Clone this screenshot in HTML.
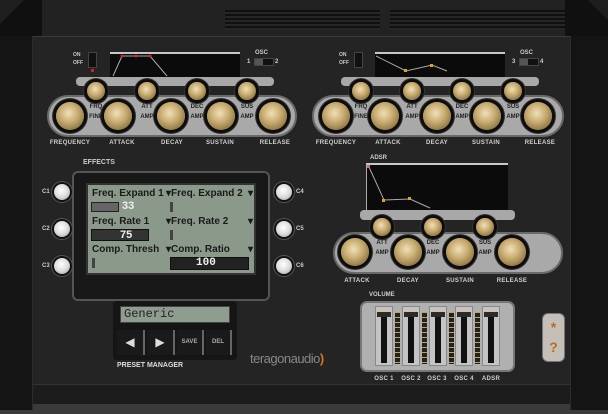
<!DOCTYPE html>
<html><head><meta charset="utf-8"><style>
*{margin:0;padding:0;box-sizing:border-box}
body{width:608px;height:414px;background:#3a3a3a;position:relative;overflow:hidden;font-family:"Liberation Sans",sans-serif}
.a{position:absolute}
.k{position:absolute;border-radius:50%;background:radial-gradient(circle at 45% 40%,#efe0b8 0%,#c9ad72 40%,#7a6232 90%,#4a3a1c 100%);box-shadow:0 0 0 3px #0d0d0d,0 0 0 4px #333}
.b{width:28px;height:28px}
.s{width:18px;height:18px}
.pill{position:absolute;background:#a9a9a9;border-radius:22px;border:2px solid #6a6a6a}
.bar{position:absolute;background:#a8a8a8;border-radius:4px}
.lb{position:absolute;color:#d0d0d0;font-size:6px;font-weight:bold;letter-spacing:.3px;transform:translateX(-50%);white-space:nowrap}
.il{position:absolute;color:#222;font-size:6px;font-weight:bold;transform:translateX(-50%)}
.disp{position:absolute;background:#0b0b0b;border-top:2px solid #c8c8c8}
.cb{position:absolute;width:16px;height:16px;border-radius:50%;background:radial-gradient(circle at 45% 40%,#fff 0%,#ddd 50%,#999 100%);box-shadow:0 0 0 2px #111,0 0 0 3px #555}
.cl{position:absolute;color:#ccc;font-size:6px;font-weight:bold}
.lcdt{position:absolute;font-size:10px;font-weight:bold;color:#1a1a1a;white-space:nowrap}
.fd{position:absolute;width:18px;height:60px;background:#c4c4c4;border:1px solid #888;top:306px}
.fd i{position:absolute;left:5px;top:8px;width:6px;height:48px;background:#111}
.fd b{position:absolute;left:1px;top:4px;width:14px;height:6px;background:#2a2a2a;border-top:1px solid #e0c080}
</style></head><body>
<div class="a" style="left:0;top:0;width:608px;height:404px;background:#1e1e1e"></div>
<div class="a" style="left:30px;top:0;width:540px;height:36px;background:#222"></div>
<div class="a" style="left:33px;top:36px;width:537px;height:348px;background:#242424;border-top:1px solid #3a3a3a"></div>
<div class="a" style="left:33px;top:384px;width:537px;height:20px;background:#1c1c1c;border-top:1px solid #333"></div>
<div class="a" style="left:0;top:36px;width:33px;height:374px;background:#141414;border-right:1px solid #2c2c2c"></div>
<div class="a" style="left:0;top:0;width:42px;height:36px;background:linear-gradient(135deg,#1e1e1e 30%,#101010 31%)"></div>
<div class="a" style="left:570px;top:36px;width:38px;height:374px;background:#141414;border-left:1px solid #2c2c2c"></div>
<div class="a" style="left:565px;top:0;width:43px;height:36px;background:linear-gradient(225deg,#1e1e1e 25%,#101010 26%)"></div>
<div class="a" style="left:225px;top:10px;width:155px;height:20px;background:repeating-linear-gradient(#101010 0 2px,#262626 2px 4px)"></div>
<div class="a" style="left:390px;top:10px;width:175px;height:20px;background:repeating-linear-gradient(#101010 0 2px,#262626 2px 4px)"></div>

<!-- OSC block 1 -->
<div class="cl" style="left:73px;top:52px;font-size:5px">ON</div>
<div class="cl" style="left:73px;top:60px;font-size:5px">OFF</div>
<div class="a" style="left:88px;top:52px;width:9px;height:16px;background:#111;border:1px solid #444"></div>
<div class="a" style="left:91px;top:69px;width:3px;height:3px;background:#c22"></div>
<div class="disp" style="left:110px;top:52px;width:130px;height:25px"></div>
<div class="cl" style="left:255px;top:50px">OSC</div>
<div class="cl" style="left:247px;top:59px">1</div><div class="cl" style="left:275px;top:59px">2</div>
<div class="a" style="left:254px;top:58px;width:20px;height:8px;background:#111;border:1px solid #444"></div>
<div class="a" style="left:255px;top:59px;width:8px;height:6px;background:#555"></div>
<div class="bar" style="left:76px;top:77px;width:198px;height:9px"></div>
<div class="pill" style="left:47px;top:95px;width:250px;height:42px"></div>
<div class="k s" style="left:87px;top:82px"></div><div class="k s" style="left:138px;top:82px"></div><div class="k s" style="left:188px;top:82px"></div><div class="k s" style="left:238px;top:82px"></div>
<div class="k b" style="left:56px;top:102px"></div><div class="k b" style="left:104px;top:102px"></div><div class="k b" style="left:157px;top:102px"></div><div class="k b" style="left:207px;top:102px"></div><div class="k b" style="left:259px;top:102px"></div>
<div class="il" style="left:96px;top:104px">FRQ</div><div class="il" style="left:147px;top:104px">ATT</div><div class="il" style="left:197px;top:104px">DEC</div><div class="il" style="left:247px;top:104px">SUS</div>
<div class="il" style="left:96px;top:114px">FINE</div><div class="il" style="left:147px;top:114px">AMP</div><div class="il" style="left:197px;top:114px">AMP</div><div class="il" style="left:247px;top:114px">AMP</div>
<div class="lb" style="left:70px;top:140px">FREQUENCY</div><div class="lb" style="left:122px;top:140px">ATTACK</div><div class="lb" style="left:172px;top:140px">DECAY</div><div class="lb" style="left:220px;top:140px">SUSTAIN</div><div class="lb" style="left:275px;top:140px">RELEASE</div>

<!-- OSC block 2 -->
<div class="cl" style="left:339px;top:52px;font-size:5px">ON</div>
<div class="cl" style="left:339px;top:60px;font-size:5px">OFF</div>
<div class="a" style="left:354px;top:52px;width:9px;height:16px;background:#111;border:1px solid #444"></div>
<div class="disp" style="left:375px;top:52px;width:130px;height:25px"></div>
<div class="cl" style="left:520px;top:50px">OSC</div>
<div class="cl" style="left:512px;top:59px">3</div><div class="cl" style="left:540px;top:59px">4</div>
<div class="a" style="left:519px;top:58px;width:20px;height:8px;background:#111;border:1px solid #444"></div>
<div class="a" style="left:520px;top:59px;width:8px;height:6px;background:#555"></div>
<div class="bar" style="left:341px;top:77px;width:198px;height:9px"></div>
<div class="pill" style="left:312px;top:95px;width:252px;height:42px"></div>
<div class="k s" style="left:352px;top:82px"></div><div class="k s" style="left:403px;top:82px"></div><div class="k s" style="left:453px;top:82px"></div><div class="k s" style="left:504px;top:82px"></div>
<div class="k b" style="left:322px;top:102px"></div><div class="k b" style="left:371px;top:102px"></div><div class="k b" style="left:423px;top:102px"></div><div class="k b" style="left:473px;top:102px"></div><div class="k b" style="left:524px;top:102px"></div>
<div class="il" style="left:361px;top:104px">FRQ</div><div class="il" style="left:412px;top:104px">ATT</div><div class="il" style="left:462px;top:104px">DEC</div><div class="il" style="left:513px;top:104px">SUS</div>
<div class="il" style="left:361px;top:114px">FINE</div><div class="il" style="left:412px;top:114px">AMP</div><div class="il" style="left:462px;top:114px">AMP</div><div class="il" style="left:513px;top:114px">AMP</div>
<div class="lb" style="left:336px;top:140px">FREQUENCY</div><div class="lb" style="left:388px;top:140px">ATTACK</div><div class="lb" style="left:437px;top:140px">DECAY</div><div class="lb" style="left:486px;top:140px">SUSTAIN</div><div class="lb" style="left:540px;top:140px">RELEASE</div>

<!-- ADSR -->
<div class="cl" style="left:370px;top:155px">ADSR</div>
<div class="a" style="left:366px;top:163px;width:142px;height:47px;background:#0b0b0b;border-top:2px solid #c8c8c8;border-left:1px solid #aaa"></div>
<div class="bar" style="left:360px;top:210px;width:155px;height:10px"></div>
<div class="pill" style="left:333px;top:232px;width:230px;height:42px"></div>
<div class="k s" style="left:373px;top:218px"></div><div class="k s" style="left:424px;top:218px"></div><div class="k s" style="left:476px;top:218px"></div>
<div class="k b" style="left:341px;top:238px"></div><div class="k b" style="left:394px;top:238px"></div><div class="k b" style="left:446px;top:238px"></div><div class="k b" style="left:498px;top:238px"></div>
<div class="il" style="left:382px;top:240px">ATT</div><div class="il" style="left:433px;top:240px">DEC</div><div class="il" style="left:485px;top:240px">SUS</div>
<div class="il" style="left:382px;top:250px">AMP</div><div class="il" style="left:433px;top:250px">AMP</div><div class="il" style="left:485px;top:250px">AMP</div>
<div class="lb" style="left:357px;top:278px">ATTACK</div><div class="lb" style="left:408px;top:278px">DECAY</div><div class="lb" style="left:460px;top:278px">SUSTAIN</div><div class="lb" style="left:512px;top:278px">RELEASE</div>

<!-- EFFECTS -->
<div class="cl" style="left:83px;top:159px;font-size:7px">EFFECTS</div>
<div class="a" style="left:72px;top:171px;width:198px;height:130px;background:#181818;border:2px solid #555;border-radius:6px"></div>
<div class="a" style="left:86px;top:183px;width:170px;height:92px;background:#8a998a;border:2px solid #333"></div>
<div class="lcdt" style="left:92px;top:188px">Freq. Expand 1</div><div class="lcdt" style="left:166px;top:188px">▾Freq. Expand 2</div><div class="lcdt" style="left:248px;top:188px">▾</div>
<div class="a" style="left:91px;top:202px;width:28px;height:10px;background:#666;border:1px solid #222"></div>
<div class="lcdt" style="left:122px;top:200px;color:#eee;font-size:11px">33</div>
<div class="a" style="left:170px;top:202px;width:3px;height:10px;background:#444"></div>
<div class="lcdt" style="left:92px;top:216px">Freq. Rate 1</div><div class="lcdt" style="left:166px;top:216px">▾Freq. Rate 2</div><div class="lcdt" style="left:248px;top:216px">▾</div>
<div class="a" style="left:91px;top:229px;width:58px;height:12px;background:#333;border:1px solid #111"></div>
<div class="lcdt" style="left:120px;top:229px;color:#eee;font-size:11px">75</div>
<div class="a" style="left:170px;top:230px;width:3px;height:10px;background:#444"></div>
<div class="lcdt" style="left:92px;top:244px">Comp. Thresh</div><div class="lcdt" style="left:166px;top:244px">▾Comp. Ratio</div><div class="lcdt" style="left:248px;top:244px">▾</div>
<div class="a" style="left:92px;top:258px;width:3px;height:10px;background:#444"></div>
<div class="a" style="left:170px;top:257px;width:79px;height:13px;background:#222;border:1px solid #111"></div>
<div class="lcdt" style="left:196px;top:257px;color:#eee;font-size:11px;font-family:'Liberation Mono',monospace">100</div>
<div class="cb" style="left:54px;top:184px"></div><div class="cb" style="left:54px;top:221px"></div><div class="cb" style="left:54px;top:258px"></div>
<div class="cb" style="left:276px;top:184px"></div><div class="cb" style="left:276px;top:221px"></div><div class="cb" style="left:276px;top:258px"></div>
<div class="cl" style="left:42px;top:189px">C1</div><div class="cl" style="left:42px;top:226px">C2</div><div class="cl" style="left:42px;top:263px">C3</div>
<div class="cl" style="left:296px;top:189px">C4</div><div class="cl" style="left:296px;top:226px">C5</div><div class="cl" style="left:296px;top:263px">C6</div>

<!-- Preset -->
<div class="a" style="left:113px;top:301px;width:124px;height:59px;background:#151515;border-radius:4px"></div>
<div class="a" style="left:120px;top:306px;width:110px;height:17px;background:#8f9c90;border:1px solid #444"></div>
<div class="a" style="left:124px;top:307px;font:12px 'Liberation Mono',monospace;color:#222">Generic</div>
<div class="a" style="left:117px;top:330px;width:28px;height:25px;background:#1a1a1a;border-right:2px solid #666;color:#ddd;font-size:12px;text-align:center;line-height:25px">◀</div>
<div class="a" style="left:147px;top:330px;width:28px;height:25px;background:#1a1a1a;border-right:2px solid #666;color:#ddd;font-size:12px;text-align:center;line-height:25px">▶</div>
<div class="a" style="left:177px;top:330px;width:27px;height:25px;background:#1a1a1a;border-right:2px solid #666;color:#aaa;font-size:6px;font-weight:bold;text-align:center;line-height:25px">SAVE</div>
<div class="a" style="left:206px;top:330px;width:26px;height:25px;background:#1a1a1a;border-right:2px solid #666;color:#aaa;font-size:6px;font-weight:bold;text-align:center;line-height:25px">DEL</div>
<div class="cl" style="left:117px;top:362px;font-size:7px;color:#ddd">PRESET MANAGER</div>
<div class="a" style="left:250px;top:351px;font-size:13px;color:#888;letter-spacing:-.5px">teragonaudio<span style="color:#e07020;font-weight:bold">)</span></div>

<!-- Volume -->
<div class="cl" style="left:369px;top:292px">VOLUME</div>
<div class="a" style="left:360px;top:301px;width:155px;height:71px;background:#b0b0b0;border:2px solid #777;border-radius:7px"></div>
<div class="fd" style="left:375px"><i></i><b></b></div>
<div class="fd" style="left:402px"><i></i><b></b></div>
<div class="fd" style="left:429px"><i></i><b></b></div>
<div class="fd" style="left:455px"><i></i><b></b></div>
<div class="fd" style="left:482px"><i></i><b></b></div>
<div class="a" style="left:395px;top:312px;width:5px;height:52px;background:repeating-linear-gradient(#c9a050 0 1px,#222 1px 5px)"></div>
<div class="a" style="left:422px;top:312px;width:5px;height:52px;background:repeating-linear-gradient(#c9a050 0 1px,#222 1px 5px)"></div>
<div class="a" style="left:449px;top:312px;width:5px;height:52px;background:repeating-linear-gradient(#c9a050 0 1px,#222 1px 5px)"></div>
<div class="a" style="left:475px;top:312px;width:5px;height:52px;background:repeating-linear-gradient(#c9a050 0 1px,#222 1px 5px)"></div>
<div class="lb" style="left:384px;top:376px">OSC 1</div><div class="lb" style="left:411px;top:376px">OSC 2</div><div class="lb" style="left:437px;top:376px">OSC 3</div><div class="lb" style="left:464px;top:376px">OSC 4</div><div class="lb" style="left:491px;top:376px">ADSR</div>
<div class="a" style="left:542px;top:313px;width:23px;height:49px;background:#c4c0b8;border-radius:6px;border:1px solid #777;color:#c06a20;font-weight:bold;text-align:center;font-size:14px;line-height:20px;padding-top:3px">*<br>?</div>

<svg class="a" style="left:0;top:0" width="608" height="414">
<polyline points="113,76 122,56 150,56 167,76" fill="none" stroke="#aaa" stroke-width="1"/>
<circle cx="122" cy="56" r="1.5" fill="#d22"/><circle cx="136" cy="56" r="1.5" fill="#d22"/><circle cx="150" cy="56" r="1.5" fill="#d22"/>
<polyline points="376,56 406,71 432,65 447,71" fill="none" stroke="#aaa" stroke-width="1"/>
<rect x="404" y="69" width="3" height="3" fill="#e0a020"/><rect x="430" y="64" width="3" height="3" fill="#e0a020"/>
<polyline points="369,167 384,200 410,199 430,208" fill="none" stroke="#aaa" stroke-width="1"/>
<rect x="367" y="165" width="3" height="3" fill="#d66"/><rect x="382" y="199" width="3" height="3" fill="#e0a020"/><rect x="408" y="197" width="3" height="3" fill="#e0a020"/>
</svg>
</body></html>
